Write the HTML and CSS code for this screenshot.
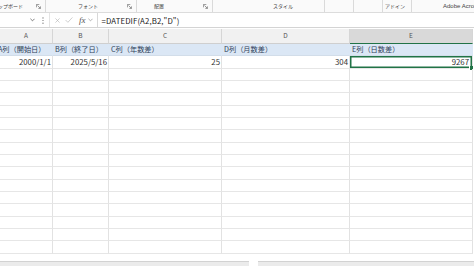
FILE: index.html
```html
<!DOCTYPE html>
<html lang="ja">
<head>
    <meta charset="UTF-8">
    <meta name="viewport" content="width=device-width, initial-scale=1.0">
    <title>DATEDIF</title>
    <link rel="stylesheet" href="styles.css">
</head>
<body>
    <!-- Ribbon group labels -->
    <div class="ribbon">
        <div class="group g-clip">
            <span class="glabel">クリップボード</span>
            <svg class="launcher" viewBox="0 0 6 6"><path d="M0.5 4V0.5H4 M1.8 1.8L5.3 5.3 M5.3 2.8V5.3H2.8"/></svg>
        </div>
        <div class="group g-font">
            <span class="glabel">フォント</span>
            <svg class="launcher" viewBox="0 0 6 6"><path d="M0.5 4V0.5H4 M1.8 1.8L5.3 5.3 M5.3 2.8V5.3H2.8"/></svg>
        </div>
        <div class="group g-align">
            <span class="glabel">配置</span>
            <svg class="launcher" viewBox="0 0 6 6"><path d="M0.5 4V0.5H4 M1.8 1.8L5.3 5.3 M5.3 2.8V5.3H2.8"/></svg>
        </div>
        <div class="group g-style"><span class="glabel">スタイル</span></div>
        <div class="group g-blank"></div>
        <div class="group g-blank"></div>
        <div class="group g-addin"><span class="glabel">アドイン</span></div>
        <div class="group g-adobe"><span class="glabel">Adobe Acrobat</span></div>
    </div>

    <!-- Formula bar -->
    <div class="formula-bar">
        <div class="namebox">
            <svg class="chev" viewBox="0 0 6 4"><polyline points="0.5,0.5 3,3 5.5,0.5"/></svg>
        </div>
        <svg class="dots" viewBox="0 0 2 8"><circle cx="1" cy="1" r="0.7"/><circle cx="1" cy="4" r="0.7"/><circle cx="1" cy="7" r="0.7"/></svg>
        <div class="fx-box">
            <svg class="ico" viewBox="0 0 6 6"><path d="M0.5 0.5L5.5 5.5 M5.5 0.5L0.5 5.5"/></svg>
            <svg class="ico check" viewBox="0 0 9 7"><polyline points="0.5,3.5 3.2,6.2 8.5,0.5"/></svg>
            <span class="fx">fx</span>
            <svg class="chev" viewBox="0 0 6 4"><polyline points="0.5,0.5 3,3 5.5,0.5"/></svg>
        </div>
        <div class="formula">=DATEDIF(A2,B2,"D")</div>
    </div>

    <!-- Sheet -->
    <div class="sheet">
        <div class="row col-head">
            <div class="cell">A</div>
            <div class="cell">B</div>
            <div class="cell">C</div>
            <div class="cell">D</div>
            <div class="cell active">E</div>
        </div>
        <div class="row title-row">
            <div class="cell first">A列（開始日）</div>
            <div class="cell">B列（終了日）</div>
            <div class="cell">C列（年数差）</div>
            <div class="cell">D列（月数差）</div>
            <div class="cell">E列（日数差）</div>
        </div>
        <div class="row data">
            <div class="cell num">2000/1/1</div>
            <div class="cell num">2025/5/16</div>
            <div class="cell num">25</div>
            <div class="cell num">304</div>
            <div class="cell num selected">9267<span class="handle"></span></div>
        </div>
        <div class="row"><div class="cell"></div><div class="cell"></div><div class="cell"></div><div class="cell"></div><div class="cell"></div></div>
        <div class="row"><div class="cell"></div><div class="cell"></div><div class="cell"></div><div class="cell"></div><div class="cell"></div></div>
        <div class="row"><div class="cell"></div><div class="cell"></div><div class="cell"></div><div class="cell"></div><div class="cell"></div></div>
        <div class="row"><div class="cell"></div><div class="cell"></div><div class="cell"></div><div class="cell"></div><div class="cell"></div></div>
        <div class="row"><div class="cell"></div><div class="cell"></div><div class="cell"></div><div class="cell"></div><div class="cell"></div></div>
        <div class="row"><div class="cell"></div><div class="cell"></div><div class="cell"></div><div class="cell"></div><div class="cell"></div></div>
        <div class="row"><div class="cell"></div><div class="cell"></div><div class="cell"></div><div class="cell"></div><div class="cell"></div></div>
        <div class="row"><div class="cell"></div><div class="cell"></div><div class="cell"></div><div class="cell"></div><div class="cell"></div></div>
        <div class="row"><div class="cell"></div><div class="cell"></div><div class="cell"></div><div class="cell"></div><div class="cell"></div></div>
        <div class="row"><div class="cell"></div><div class="cell"></div><div class="cell"></div><div class="cell"></div><div class="cell"></div></div>
        <div class="row"><div class="cell"></div><div class="cell"></div><div class="cell"></div><div class="cell"></div><div class="cell"></div></div>
        <div class="row"><div class="cell"></div><div class="cell"></div><div class="cell"></div><div class="cell"></div><div class="cell"></div></div>
        <div class="row"><div class="cell"></div><div class="cell"></div><div class="cell"></div><div class="cell"></div><div class="cell"></div></div>
        <div class="row"><div class="cell"></div><div class="cell"></div><div class="cell"></div><div class="cell"></div><div class="cell"></div></div>
        <div class="row"><div class="cell"></div><div class="cell"></div><div class="cell"></div><div class="cell"></div><div class="cell"></div></div>
    </div>

    <!-- Bottom edge -->
    <div class="sheet-bottom"><span class="split"></span></div>
</body>
</html>
```
FILE: styles.css
```css
body {
    margin: 0;
    width: 474px;
    height: 266px;
    overflow: hidden;
    display: flex;
    flex-direction: column;
    background-color: #ffffff;
    font-family: "Noto Sans CJK JP", "Liberation Sans", sans-serif;
    color: #333333;
}

/* ribbon group labels */
.ribbon {
    display: flex;
    height: 12px;
    flex-shrink: 0;
    background-color: #fafafa;
    border-bottom: 1px solid #dcdcdc;
    overflow: hidden;
}
.group {
    display: flex;
    align-items: center;
    height: 12px;
    box-sizing: border-box;
    border-right: 1px solid #dadada;
    overflow: hidden;
    white-space: nowrap;
    flex-shrink: 0;
}
.glabel {
    font-size: 5px;
    line-height: 12px;
    color: #444444;
}
.launcher {
    width: 5px;
    height: 5px;
    margin-left: auto;
    margin-right: 4px;
    fill: none;
    stroke: #666666;
    stroke-width: 0.8;
}
.g-clip { width: 46px; }
.g-clip .glabel { margin-left: -12px; }
.g-font { width: 91px; }
.g-font .glabel { margin-left: 32px; }
.g-align { width: 76px; }
.g-align .glabel { margin-left: 17px; }
.g-style { width: 112px; }
.g-style .glabel { margin-left: 60px; }
.g-blank { width: 29px; }
.g-addin { width: 29px; }
.g-addin .glabel { margin-left: 2px; }
.g-adobe { width: 62px; border-right: none; }
.g-adobe .glabel { margin-left: 31px; font-size: 6px; font-family: "Liberation Sans", sans-serif; }

/* formula bar */
.formula-bar {
    display: flex;
    align-items: center;
    height: 15px;
    flex-shrink: 0;
    box-sizing: border-box;
    border-bottom: 1px solid #d4d4d4;
    background-color: #ffffff;
}
.namebox {
    width: 40px;
    height: 100%;
    display: flex;
    align-items: center;
    justify-content: flex-end;
    padding-right: 5px;
    box-sizing: border-box;
}
.chev {
    width: 5px;
    height: 4px;
    fill: none;
    stroke: #555555;
    stroke-width: 0.9;
}
.dots {
    width: 2px;
    height: 7px;
    margin-left: 2px;
    fill: #666666;
}
.fx-box {
    display: flex;
    align-items: center;
    gap: 5px;
    height: 100%;
    margin-left: 5px;
    padding: 0 4px 0 5px;
    border-left: 1px solid #e4e4e4;
    border-right: 1px solid #d8d8d8;
}
.ico {
    width: 5px;
    height: 5px;
    fill: none;
    stroke: #b0b0b0;
    stroke-width: 0.7;
}
.ico.check {
    width: 8px;
    height: 6px;
}
.fx {
    font-family: "Liberation Serif", serif;
    font-style: italic;
    font-size: 9px;
    color: #555555;
    margin-left: 1px;
    margin-right: -3px;
}
.fx-box .chev {
    stroke: #999999;
}
.formula {
    padding-left: 4px;
    font-size: 7.8px;
    letter-spacing: 0.1px;
    color: #222222;
    white-space: nowrap;
}

/* sheet */
.sheet {
    flex: 1;
    overflow: hidden;
    margin-top: 1px;
}
.row {
    display: grid;
    grid-template-columns: 53px 56px 113px 128px 123px;
    height: 12.33px;
}
.cell {
    position: relative;
    box-sizing: border-box;
    border-right: 1px solid #e2e2e2;
    border-bottom: 1px solid #e6e6e6;
    font-size: 7.2px;
    line-height: 11px;
    padding: 0 2px;
    white-space: nowrap;
}
.col-head {
    height: 15px;
}
.col-head .cell {
    background-color: #f1f1f1;
    border-right-color: #d6d6d6;
    border-bottom-color: #cfcfcf;
    text-align: center;
    line-height: 13px;
    font-size: 6.5px;
    color: #555555;
}
.col-head .active {
    background-color: #d9d9d9;
    border-bottom: 1px solid #217346;
}
.title-row .cell {
    background-color: #dbe7f5;
    border-right-color: #dbe7f5;
    border-bottom-color: #d2dde9;
    color: #2f3f5a;
}
.title-row .first {
    text-indent: -4px;
}
.data .num {
    text-align: right;
    font-size: 7.8px;
    padding-right: 1px;
    color: #333333;
}
.selected {
    box-shadow: inset 0 0 0 1.5px #217346;
    padding-right: 3px !important;
}
.handle {
    position: absolute;
    right: -1px;
    bottom: -2px;
    width: 3px;
    height: 4px;
    background-color: #217346;
    border-left: 1px solid #ffffff;
}

.sheet-bottom {
    position: relative;
    height: 4px;
    flex-shrink: 0;
    background-color: #ebebeb;
    border-top: 1px solid #d2d2d2;
}
.split {
    position: absolute;
    left: 249px;
    top: -1px;
    width: 9px;
    height: 5px;
    background-color: #ffffff;
}
```
